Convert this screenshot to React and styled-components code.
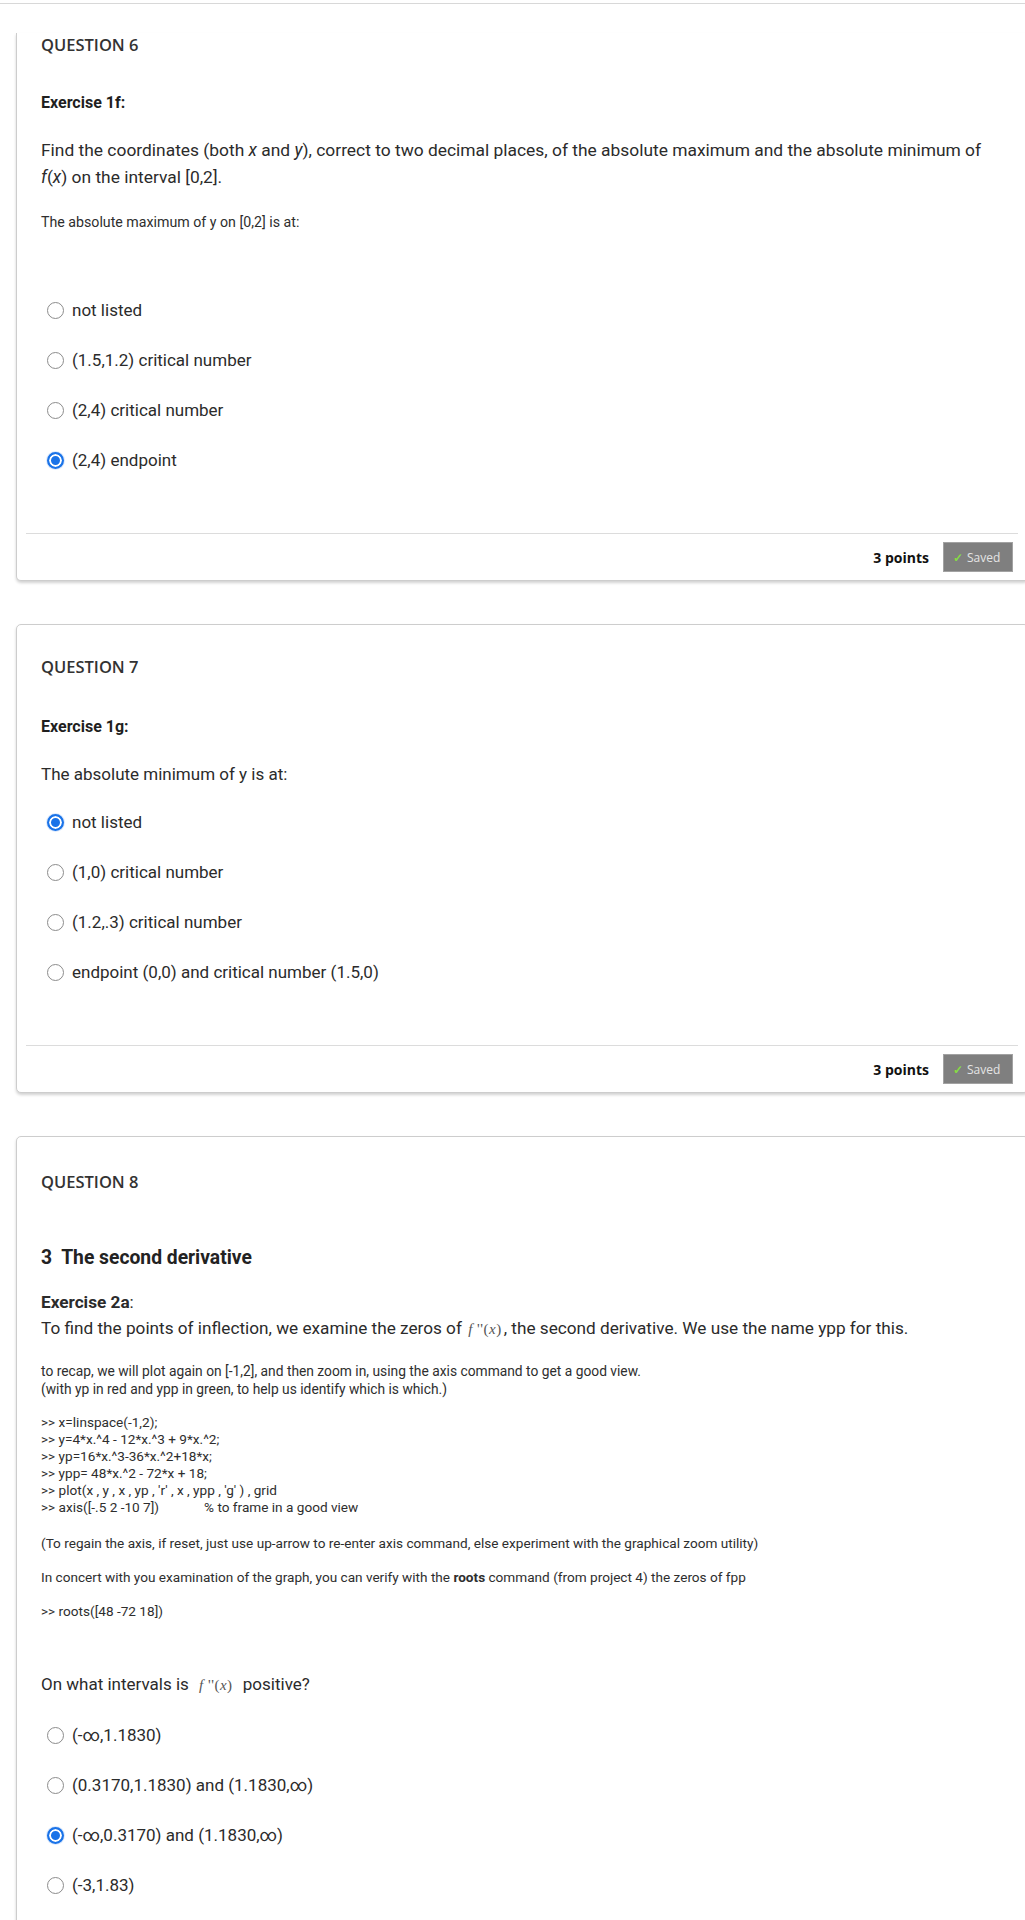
import React from "react";
import styled, { createGlobalStyle } from "styled-components";

const GlobalStyle = createGlobalStyle`
  html, body {
    margin: 0;
    padding: 0;
    background: #fff;
    overflow-x: hidden;
  }
  body {
    font-family: Roboto, "Liberation Sans", sans-serif;
    color: #333;
  }
`;

const Page = styled.div`
  width: 1025px;
  overflow: hidden;
  padding-bottom: 60px;
`;

const TopRule = styled.div`
  height: 3px;
  border-bottom: 1px solid #d8d8d8;
`;

const Card = styled.section`
  margin: ${(p) => (p.$first ? "0" : "43px")} 0 0 16px;
  width: 1013px;
  box-sizing: border-box;
  background: #fff;
  border: 1px solid #cdcdcd;
  border-top: ${(p) => (p.$first ? "none" : "1px solid #cdcdcd")};
  border-radius: ${(p) => (p.$first ? "0 0 5px 5px" : "5px")};
  box-shadow: 0 2px 3px rgba(0, 0, 0, 0.18);
`;

const Body = styled.div`
  padding: 0 24px ${(p) => (p.$last ? "80px" : "48px")} 24px;
`;

const QuestionLabel = styled.h3`
  margin: ${(p) => p.$top}px 0 0;
  font: 600 16.5px/24px "Open Sans", sans-serif;
  color: #333;
`;

const ExerciseTitle = styled.h4`
  margin: ${(p) => p.$top}px 0 0;
  font: 700 16px/24px Roboto, sans-serif;
  color: #1f1f1f;
`;

const SectionHeading = styled.h2`
  margin: ${(p) => p.$top}px 0 0;
  font: 700 19.3px/26px Roboto, sans-serif;
  color: #222;
`;

const Para = styled.p`
  margin: ${(p) => p.$top}px 0 0;
  font-size: ${(p) => p.$size || 17.4}px;
  line-height: ${(p) => p.$lh || 27}px;
  color: #2b2b2b;
`;

const Small = styled.p`
  margin: ${(p) => p.$top}px 0 0;
  font-size: ${(p) => p.$size || 13.6}px;
  line-height: ${(p) => p.$lh || 18}px;
  color: #2e2e2e;
  white-space: pre-wrap;
`;

const Gap = styled.span`
  display: inline-block;
  width: ${(p) => p.$w}px;
`;

const MathExpr = styled.span`
  font-family: "Liberation Serif", "DejaVu Serif", serif;
  font-size: 15px;
  color: #555;
  margin: 0 ${(p) => p.$space || 2}px;
  letter-spacing: 0.5px;
`;

const OptionList = styled.div`
  margin-top: ${(p) => p.$top}px;
  display: flex;
  flex-direction: column;
`;

const OptionRow = styled.label`
  height: 50px;
  display: flex;
  align-items: center;
  gap: 8px;
  padding-left: 6px;
  font-size: 17px;
  color: #2b2b2b;
`;

const Radio = styled.span`
  width: 17px;
  height: 17px;
  box-sizing: border-box;
  border-radius: 50%;
  flex: none;
  border: ${(p) => (p.$checked ? "2px solid #1a73e8" : "1.5px solid #8c8c8c")};
  background: ${(p) => (p.$checked ? "#1a73e8" : "#fff")};
  box-shadow: ${(p) =>
    p.$checked ? "inset 0 0 0 2px #fff, 0 0 0 1px rgba(26,115,232,0.15)" : "none"};
`;

const Footer = styled.div`
  margin: 0 10px 0 9px;
  border-top: 1px solid #dcdcdc;
  padding: 8px 5px 8px 0;
  display: flex;
  justify-content: flex-end;
  align-items: center;
  gap: 14px;
`;

const Points = styled.span`
  font: 700 14px "Open Sans", sans-serif;
  color: #111;
`;

const SavedBadge = styled.span`
  width: 70px;
  height: 30px;
  box-sizing: border-box;
  display: inline-flex;
  align-items: center;
  gap: 4px;
  padding-left: 9px;
  background: #7f7f7f;
  border: 1px solid #a2a2a2;
  color: #e4e4e4;
  font: 400 12px "Open Sans", sans-serif;
`;

const Check = styled.span`
  color: #86dc44;
  font-size: 12px;
  font-weight: 700;
`;

function Option({ label, checked }) {
  return (
    <OptionRow>
      <Radio $checked={checked} />
      <span>{label}</span>
    </OptionRow>
  );
}

function CardFooter() {
  return (
    <Footer>
      <Points>3 points</Points>
      <SavedBadge>
        <Check>✓</Check>Saved
      </SavedBadge>
    </Footer>
  );
}

const Fpp = ({ space }) => (
  <MathExpr $space={space}>
    <i>f</i> ''(<i>x</i>)
  </MathExpr>
);

export default function App() {
  return (
    <Page>
      <GlobalStyle />
      <TopRule />

      <Card $first>
        <Body>
          <QuestionLabel $top={29}>QUESTION 6</QuestionLabel>
          <ExerciseTitle $top={34}>Exercise 1f:</ExerciseTitle>
          <Para $top={22}>
            Find the coordinates (both <i>x</i> and <i>y</i>), correct to two decimal places, of the
            absolute maximum and the absolute minimum of <i>f</i>(<i>x</i>) on the interval [0,2].
          </Para>
          <Small $top={21} $lh={20} $size={14.2}>
            The absolute maximum of y on [0,2] is at:
          </Small>
          <OptionList $top={53}>
            <Option label="not listed" />
            <Option label="(1.5,1.2) critical number" />
            <Option label="(2,4) critical number" />
            <Option label="(2,4) endpoint" checked />
          </OptionList>
        </Body>
        <CardFooter />
      </Card>

      <Card>
        <Body>
          <QuestionLabel $top={30}>QUESTION 7</QuestionLabel>
          <ExerciseTitle $top={36}>Exercise 1g:</ExerciseTitle>
          <Para $top={23} $lh={24} $size={17}>
            The absolute minimum of y is at:
          </Para>
          <OptionList $top={11}>
            <Option label="not listed" checked />
            <Option label="(1,0) critical number" />
            <Option label="(1.2,.3) critical number" />
            <Option label="endpoint (0,0) and critical number (1.5,0)" />
          </OptionList>
        </Body>
        <CardFooter />
      </Card>

      <Card>
        <Body $last>
          <QuestionLabel $top={33}>QUESTION 8</QuestionLabel>
          <SectionHeading $top={51}>3&nbsp; The second derivative</SectionHeading>
          <Para $top={18} $lh={26} $size={17.2}>
            <b>Exercise 2a</b>:
            <br />
            To find the points of inflection, we examine the zeros of <Fpp />, the second
            derivative. We use the name ypp for this.
          </Para>
          <Small $top={20} $size={13.8}>
            to recap, we will plot again on [-1,2], and then zoom in, using the axis command to get a
            good view.
            <br />
            (with yp in red and ypp in green, to help us identify which is which.)
          </Small>
          <Small $top={16} $lh={17}>
            &gt;&gt; x=linspace(-1,2);
            <br />
            &gt;&gt; y=4*x.^4 - 12*x.^3 + 9*x.^2;
            <br />
            &gt;&gt; yp=16*x.^3-36*x.^2+18*x;
            <br />
            &gt;&gt; ypp= 48*x.^2 - 72*x + 18;
            <br />
            &gt;&gt; plot(x , y , x , yp , 'r' , x , ypp , 'g' ) , grid
            <br />
            &gt;&gt; axis([-.5 2 -10 7])
            <Gap $w={45} />% to frame in a good view
          </Small>
          <Small $top={18}>
            (To regain the axis, if reset, just use up-arrow to re-enter axis command, else experiment
            with the graphical zoom utility)
          </Small>
          <Small $top={16}>
            In concert with you examination of the graph, you can verify with the <b>roots</b> command
            (from project 4) the zeros of fpp
          </Small>
          <Small $top={16}>&gt;&gt; roots([48 -72 18])</Small>
          <Para $top={52} $lh={24} $size={17}>
            On what intervals is <Fpp space={6} /> positive?
          </Para>
          <OptionList $top={13}>
            <Option label="(-∞,1.1830)" />
            <Option label="(0.3170,1.1830) and (1.1830,∞)" />
            <Option label="(-∞,0.3170) and (1.1830,∞)" checked />
            <Option label="(-3,1.83)" />
          </OptionList>
        </Body>
      </Card>
    </Page>
  );
}
